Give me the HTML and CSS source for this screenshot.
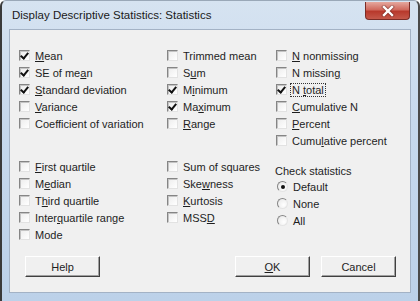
FILE: index.html
```html
<!DOCTYPE html>
<html>
<head>
<meta charset="utf-8">
<link rel="stylesheet" href="styles.css">
</head>
<body>
<div class="window">
  <div class="titlebar">
    <span class="title">Display Descriptive Statistics: Statistics</span>
    <div class="close">
      <svg width="14" height="12" viewBox="0 0 14 12">
        <path d="M3 2 L11 10 M11 2 L3 10" stroke="#5a1d18" stroke-width="4" stroke-linecap="square" opacity="0.45"/>
        <path d="M3 2 L11 10 M11 2 L3 10" stroke="#ffffff" stroke-width="2.4" stroke-linecap="square"/>
      </svg>
    </div>
  </div>
  <div class="client">
    <div class="group g1">
      <div class="col c1">
        <div class="row"><span class="cb on"></span><span><u>M</u>ean</span></div>
        <div class="row"><span class="cb on"></span><span>SE of me<u>a</u>n</span></div>
        <div class="row"><span class="cb on"></span><span><u>S</u>tandard deviation</span></div>
        <div class="row"><span class="cb"></span><span><u>V</u>ariance</span></div>
        <div class="row"><span class="cb"></span><span>Coefficient of variation</span></div>
      </div>
      <div class="col c2">
        <div class="row"><span class="cb"></span><span>Trimmed mean</span></div>
        <div class="row"><span class="cb"></span><span>S<u>u</u>m</span></div>
        <div class="row"><span class="cb on"></span><span>M<u>i</u>nimum</span></div>
        <div class="row"><span class="cb on"></span><span>Ma<u>x</u>imum</span></div>
        <div class="row"><span class="cb"></span><span><u>R</u>ange</span></div>
      </div>
      <div class="col c3">
        <div class="row"><span class="cb"></span><span><u>N</u> nonmissing</span></div>
        <div class="row"><span class="cb"></span><span>N missin<u>g</u></span></div>
        <div class="row"><span class="cb on"></span><span class="focus">N <u>t</u>otal</span></div>
        <div class="row"><span class="cb"></span><span><u>C</u>umulative N</span></div>
        <div class="row"><span class="cb"></span><span><u>P</u>ercent</span></div>
        <div class="row"><span class="cb"></span><span>Cumu<u>l</u>ative percent</span></div>
      </div>
    </div>
    <div class="group g2">
      <div class="col c1">
        <div class="row"><span class="cb"></span><span><u>F</u>irst quartile</span></div>
        <div class="row"><span class="cb"></span><span>M<u>e</u>dian</span></div>
        <div class="row"><span class="cb"></span><span>T<u>h</u>ird quartile</span></div>
        <div class="row"><span class="cb"></span><span>Inter<u>q</u>uartile range</span></div>
        <div class="row"><span class="cb"></span><span>Mode</span></div>
      </div>
      <div class="col c2">
        <div class="row"><span class="cb"></span><span>Sum of squares</span></div>
        <div class="row"><span class="cb"></span><span>Ske<u>w</u>ness</span></div>
        <div class="row"><span class="cb"></span><span><u>K</u>urtosis</span></div>
        <div class="row"><span class="cb"></span><span>MSS<u>D</u></span></div>
      </div>
      <div class="col c3 radios">
        <div class="label">Check statistics</div>
        <div class="row"><span class="rb on"></span><span>Default</span></div>
        <div class="row"><span class="rb"></span><span>None</span></div>
        <div class="row"><span class="rb"></span><span>All</span></div>
      </div>
    </div>
    <div class="buttons">
      <div class="btn">Help</div>
      <div class="spacer"></div>
      <div class="btn"><u>O</u>K</div>
      <div class="btn">Cancel</div>
    </div>
  </div>
</div>
</body>
</html>
```
FILE: styles.css
```css
html, body {
  margin: 0;
  padding: 0;
  background: #ffffff;
}
.window {
  width: 420px;
  height: 301px;
  box-sizing: border-box;
  border-left: 2px solid #3a3a3a;
  border-right: 2px solid #4a4a4a;
  border-top: 1px solid #9aa8b8;
  border-radius: 6px 6px 0 0;
  background: linear-gradient(to bottom, #d6e3f1 0%, #c7d9ed 40%, #bcd1e9 100%);
  padding: 0 7px 8px 7px;
  display: flex;
  flex-direction: column;
  font-family: "Liberation Sans", Arial, sans-serif;
  font-size: 11px;
  color: #1e1e1e;
}
.titlebar {
  height: 28px;
  display: flex;
  justify-content: space-between;
  align-items: flex-start;
  flex-shrink: 0;
}
.title {
  padding-left: 3px;
  line-height: 28px;
  font-size: 11.5px;
  color: #1a1a1a;
}
.close {
  margin-top: 1px;
  margin-right: 1px;
  width: 45px;
  height: 18px;
  box-sizing: border-box;
  border: 1px solid #7a2c26;
  border-top: none;
  border-radius: 0 0 4px 4px;
  background: linear-gradient(to bottom, #e5a89e 0%, #d06a5e 45%, #b8392c 55%, #c4584a 100%);
  display: flex;
  align-items: center;
  justify-content: center;
}
.close svg { display: block; }
.client {
  flex: 1;
  border: 1px solid #a3b2c5;
  background: #f0f0f0;
  display: flex;
  flex-direction: column;
  padding: 0 14px 15px 9px;
}
.group {
  display: flex;
}
.g1 { margin-top: 17px; }
.g2 { margin-top: 9px; }
.col { display: flex; flex-direction: column; }
.c1 { width: 148px; }
.c2 { width: 109px; }
.c3 { flex: 1; }
.row {
  height: 17px;
  display: flex;
  align-items: center;
  white-space: nowrap;
}
.cb {
  width: 11px;
  height: 11px;
  box-sizing: border-box;
  border: 1px solid;
  border-color: #858585 #e2e2e2 #e2e2e2 #858585;
  box-shadow: inset 1px 1px 0 #c4c4c4;
  background: linear-gradient(135deg, #ececec, #ffffff);
  margin-right: 5px;
  flex-shrink: 0;
  position: relative;
}
.cb.on::after {
  content: "";
  position: absolute;
  left: 2px;
  top: 0px;
  width: 3px;
  height: 6px;
  border-right: 2px solid #111;
  border-bottom: 2px solid #111;
  transform: rotate(40deg);
}
.radios { padding-top: 6px; }
.label {
  height: 14px;
  line-height: 14px;
  margin-left: -1px;
  white-space: nowrap;
}
.radios .row { padding-left: 1px; }
.rb {
  width: 11px;
  height: 11px;
  box-sizing: border-box;
  border-radius: 50%;
  border: 1px solid;
  border-color: #858585 #e4e4e4 #e4e4e4 #858585;
  background: radial-gradient(circle at 65% 65%, #ffffff, #e6e6e6);
  margin-right: 5px;
  flex-shrink: 0;
  position: relative;
}
.rb.on::after {
  content: "";
  position: absolute;
  left: 2.5px;
  top: 2.5px;
  width: 4px;
  height: 4px;
  border-radius: 50%;
  background: #111;
}
.focus {
  outline: 1px dotted #333;
  outline-offset: 0px;
  padding: 0 1px;
  margin-left: -1px;
}
.buttons {
  margin-top: auto;
  display: flex;
  gap: 11px;
  padding-left: 6px;
}
.spacer { flex: 1; }
.btn {
  width: 75px;
  height: 21px;
  box-sizing: border-box;
  border: 1px solid;
  border-color: #ffffff #404040 #404040 #ffffff;
  box-shadow: inset -1px -1px 0 #a0a0a0;
  background: #f0f0f0;
  display: flex;
  align-items: center;
  justify-content: center;
}
u { text-decoration: underline; text-underline-offset: 1px; }
```
